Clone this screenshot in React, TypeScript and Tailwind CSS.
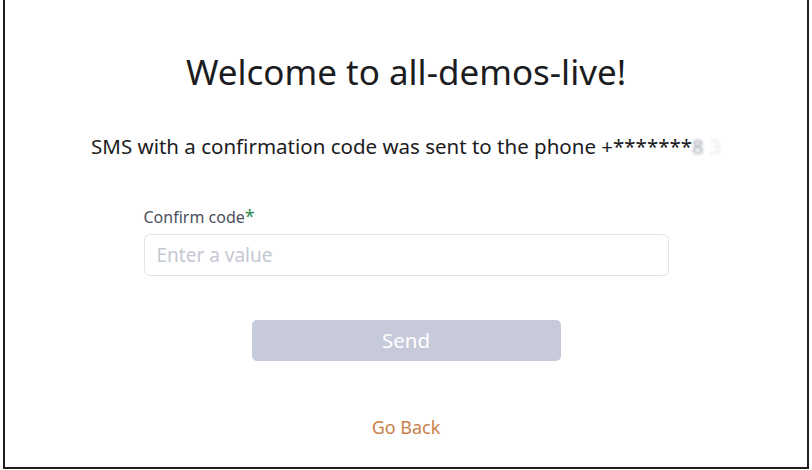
import React from 'react';

const App: React.FC = () => {
  return (
    <div className="w-[812px] h-[470px] bg-white px-[3px] pb-[1px] font-['Noto_Sans','Open_Sans',sans-serif]">
      <div className="h-full border-x-2 border-b-2 border-[#1f1f1f] flex flex-col items-center">
        {/* Title */}
        <h1 className="mt-[48px] text-[35px] leading-[48px] text-[#1b1c22]">Welcome to all-demos-live!</h1>

        {/* Phone notice */}
        <p className="mt-[36px] text-[20.5px] leading-[28px] text-[#1b1c22] whitespace-nowrap">
          SMS with a confirmation code was sent to the phone +*******
          <span className="text-[#9ca3af] blur-[1.5px]">8</span>
          <span className="text-[#e5e7eb] blur-[1.5px]"> 3</span>
        </p>

        {/* Form */}
        <div className="mt-[45px] w-[525px] flex flex-col">
          <label className="text-[16px] leading-[22px] text-[#4b4f5c]">
            Confirm code<span className="text-[#2e8b4e] text-[18px]">*</span>
          </label>
          <input
            type="text"
            placeholder="Enter a value"
            className="mt-[6px] h-[42px] w-full rounded-[6px] border border-[#e3e4ea] px-[12px] text-[19px] text-[#1b1c22] placeholder:text-[#c4c7d4] outline-none"
          />
        </div>

        <button className="mt-[44px] w-[309px] h-[41px] rounded-[5px] bg-[#c7cadb] text-white text-[20.5px]">
          Send
        </button>

        <a className="mt-[54px] text-[18px] leading-[24px] text-[#c8804a] cursor-pointer">Go Back</a>
      </div>
    </div>
  );
};

export default App;
